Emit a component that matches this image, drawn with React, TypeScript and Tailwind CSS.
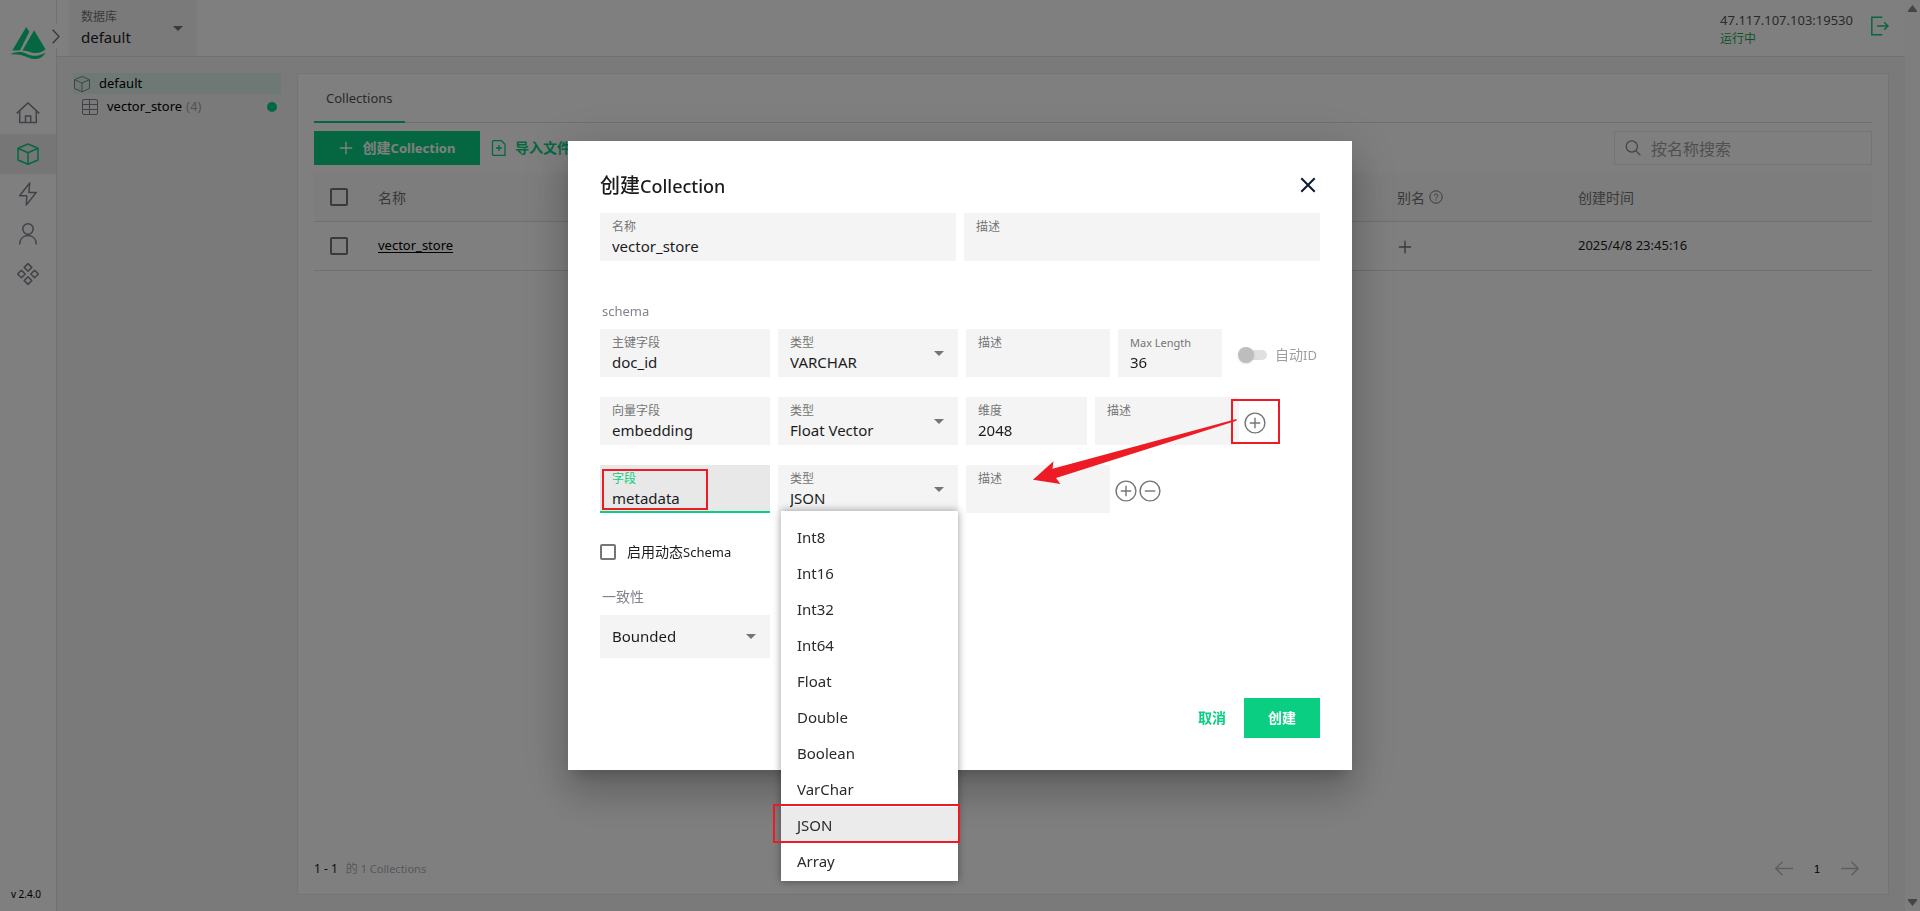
import { useState } from "react";
import type { ReactNode } from "react";

const dataTypes = ["Int8", "Int16", "Int32", "Int64", "Float", "Double", "Boolean", "VarChar", "JSON", "Array"];

const Svg = ({ size = 24, box = 24, stroke = 1.5, className = "", children }: any) => (
  <svg
    width={size}
    height={size}
    viewBox={`0 0 ${box} ${box}`}
    fill="none"
    stroke="currentColor"
    strokeWidth={stroke}
    className={`shrink-0 ${className}`}
    aria-hidden="true"
  >
    {children}
  </svg>
);

const CubeIcon = ({ size = 24, stroke = 1.5 }: any) => (
  <Svg size={size} stroke={stroke}>
    <path d="M12 2 22 6.3V18L12 22.3 2 18V6.3zM2 6.3l10 4.4 10-4.4M12 10.7v11.6" strokeLinejoin="round" />
  </Svg>
);

const HomeIcon = () => (
  <Svg>
    <path d="M.7 11.4 12 .9l11.300 10.500M3.700 9v11.500h16.600V9M9.500 20.500v-6.500h5.200v6.500" />
  </Svg>
);

const BoltIcon = () => (
  <Svg>
    <path d="M13.7 1 3.6 13.7h7.2L10.3 23l10-12.6h-7.4z" strokeLinejoin="round" />
  </Svg>
);

const UserIcon = () => (
  <Svg>
    <circle cx="12" cy="7" r="5.2" />
    <path d="M3.8 22.4c0-5.4 3.2-8.8 8.2-8.8s8.2 3.4 8.2 8.8" />
  </Svg>
);

const DiamondsIcon = () => (
  <Svg>
    <path
      d="m12 1.6 3.8 3.8L12 9.2 8.2 5.4zM12 14.8l3.8 3.8-3.8 3.8-3.8-3.8zM5.4 8.2 9.2 12l-3.8 3.8L1.6 12zM18.6 8.2l3.8 3.8-3.8 3.8-3.8-3.8z"
      strokeLinejoin="round"
    />
  </Svg>
);

const TableIcon = () => (
  <Svg size={16} box={16} stroke={1}>
    <rect x=".5" y=".5" width="15" height="15" rx="1.5" />
    <path d="M.5 5.5h15M.5 10.5h15M7.5 .5v15" />
  </Svg>
);

const PlusIcon = ({ size = 14 }: any) => (
  <Svg size={size} box={14} stroke={1.4}>
    <path d="M7 .8v12.4M.8 7h12.4" />
  </Svg>
);

const CirclePlus = () => (
  <Svg size={22} box={22} stroke={1.4}>
    <circle cx="11" cy="11" r="9.9" />
    <path d="M11 5.8v10.4M5.8 11h10.4" />
  </Svg>
);

const CircleMinus = () => (
  <Svg size={22} box={22} stroke={1.4}>
    <circle cx="11" cy="11" r="9.9" />
    <path d="M5.8 11h10.4" />
  </Svg>
);

const Logo = () => (
  <svg width="36" height="33" viewBox="0 0 36 33" fill="#0acf83" aria-hidden="true">
    <path d="M16.2 0 2.4 23.3c2.6.5 5.4.4 7.8-.2L19.300 4.800z" />
    <path d="M24.1 3.3 12.500 23.400c4.600-.300 8.300 2.600 13.100 2.600 4.200 0 7.500-1.600 9.900-3.800z" />
    <path d="M0 27.400c6-3 11.500-3.200 16.500-.700 6.500 3.200 12.500 2.600 19.300-1.300-3.600 6-10.300 8.200-17 5.400-6.500-2.800-11.800-3.900-18.800-3.400z" />
  </svg>
);

const Caret = ({ className = "" }: any) => (
  <svg width="10" height="5" viewBox="0 0 10 5" fill="#757575" className={`pointer-events-none absolute ${className}`} aria-hidden="true">
    <path d="M0 0h10L5 5z" />
  </svg>
);

const Field = ({ id, label, value = "", width, focused = false, children }: any) => (
  <div
    className={`relative flex h-12 flex-col pt-[6px] ${width} ${
      focused ? "border-b-2 border-[#0acf83] bg-[#e8e8e8]" : "bg-[#f4f4f4]"
    }`}
  >
    <label htmlFor={id} className={`px-3 text-xs leading-4 ${focused ? "text-[#0acf83]" : "text-[#757575]"}`}>
      {label}
    </label>
    <input id={id} defaultValue={value} className="h-[22px] w-full bg-transparent px-3 text-[15px] text-[#1c1c1e] outline-none" />
    {children}
  </div>
);

const TypeField = ({ id, value, children }: any) => (
  <div className="relative flex h-12 w-[180px] flex-col bg-[#f4f4f4] pt-[6px]">
    <label htmlFor={id} className="px-3 text-xs leading-4 text-[#757575]">
      类型
    </label>
    <select
      id={id}
      defaultValue={value}
      className="h-[22px] w-full appearance-none bg-transparent px-3 text-[15px] text-[#1c1c1e] outline-none"
    >
      <option>{value}</option>
    </select>
    <Caret className="top-[22px] right-[14px]" />
    {children}
  </div>
);

const TypeMenu = ({ selected, onSelect }: { selected: string; onSelect: (t: string) => void }) => (
  <ul
    role="listbox"
    aria-label="类型"
    className="absolute top-[46px] left-[3px] z-10 w-[177px] bg-white pt-2 pb-[2px] shadow-[0_0_8px_rgba(0,0,0,0.4)]"
  >
    {dataTypes.map((type) => (
      <li
        key={type}
        role="option"
        aria-selected={type === selected}
        onClick={() => onSelect(type)}
        className={`relative h-9 px-4 text-[15px] leading-9 text-[#2b2b2d] ${type === selected ? "bg-[#ebebeb]" : ""}`}
      >
        {type}
        {type === selected && (
          <span className="pointer-events-none absolute -top-[3px] -right-[2px] bottom-0 -left-2 border-2 border-[#ed1c24]" />
        )}
      </li>
    ))}
  </ul>
);

const Checkbox = ({ id, label, size }: { id: string; label?: string; size: string }) => (
  <input
    id={id}
    type="checkbox"
    aria-label={label}
    className={`block shrink-0 appearance-none rounded-[2px] border-2 border-[#757575] ${size}`}
  />
);

const NavItem = ({ label, active = false, children }: { label: string; active?: boolean; children: ReactNode }) => (
  <a
    href="#"
    aria-label={label}
    className={`flex h-10 items-center justify-center ${active ? "bg-[#ececec] text-[#0acf83]" : "text-[#82838e]"}`}
  >
    {children}
  </a>
);

const Sidebar = () => (
  <nav className="relative flex w-[57px] shrink-0 flex-col border-r border-[#e0e0e0] bg-white">
    <div className="flex h-[94px] justify-center pt-[27px]">
      <Logo />
    </div>
    <button aria-label="展开" className="absolute top-6 -right-[6px] flex h-6 w-3 items-center justify-center bg-white text-[#757575]">
      <svg width="8" height="15" viewBox="0 0 8 15" fill="none" stroke="currentColor" strokeWidth="1.4" aria-hidden="true">
        <path d="m.7.7 6.300 6.800-6.300 6.800" />
      </svg>
    </button>
    <NavItem label="首页"><HomeIcon /></NavItem>
    <NavItem label="数据库" active><CubeIcon /></NavItem>
    <NavItem label="搜索"><BoltIcon /></NavItem>
    <NavItem label="用户"><UserIcon /></NavItem>
    <NavItem label="系统"><DiamondsIcon /></NavItem>
    <div className="mt-auto pr-1 pb-2 text-center text-[10px] leading-[18px] text-black">v 2.4.0</div>
  </nav>
);

const Header = () => (
  <header className="flex h-[57px] shrink-0 justify-between border-b border-[#e0e0e0] bg-white pr-4 pl-3">
    <div className="relative flex w-32 flex-col bg-[#f4f4f4] pt-[9px]">
      <label htmlFor="db" className="px-3 text-xs leading-4 text-[#757575]">数据库</label>
      <select id="db" className="h-6 w-full appearance-none bg-transparent px-3 text-[15px] text-[#1c1c1e] outline-none">
        <option>default</option>
      </select>
      <Caret className="top-[26px] right-[14px]" />
    </div>
    <div className="flex gap-4">
      <div className="pt-[10px]">
        <div className="text-[13px] leading-5 text-[#545454]">47.117.107.103:19530</div>
        <div className="pt-px text-xs leading-4 text-[#1ba954]">运行中</div>
      </div>
      <button aria-label="退出" className="flex h-[52px] items-center text-[#0acf83]">
        <Svg size={20} box={20} stroke={1.5}>
          <path d="M13.300 1.300H2.800v17.400h10.500M8 10h11M15.200 6.200 19 10l-3.800 3.800" />
        </Svg>
      </button>
    </div>
  </header>
);

const Tree = () => (
  <aside className="w-[208px] shrink-0 text-[13px] text-black">
    <div className="flex h-[21px] items-center gap-2 bg-[#dcf0e8]">
      <span className="flex text-[#82838e]"><CubeIcon size={18} stroke={1.300} /></span>
      <span className="pt-px">default</span>
    </div>
    <div className="flex h-[25px] items-center pr-1 pl-[9px]">
      <span className="text-[#82838e]"><TableIcon /></span>
      <span className="ml-[9px] pt-px">vector_store</span>
      <span className="ml-1 pt-px text-[#a4a4ae]">(4)</span>
      <span className="ml-auto size-[10px] rounded-full bg-[#0acf83]" />
    </div>
  </aside>
);

const Collections = () => (
  <section className="flex min-w-0 flex-1 flex-col border border-[#e9e9ed] bg-white px-4 text-[#1c1c1e]">
    <div className="flex h-[49px] border-b border-[#e0e0e0]">
      <button className="-mb-px h-[49px] border-b-2 border-[#0acf83] px-3 pt-[2px] text-[13px] text-[#545459]">
        Collections
      </button>
    </div>

    <div className="mt-2 flex items-center">
      <button className="flex h-[34px] w-[166px] items-center justify-center gap-[10px] bg-[#0acf83] text-sm font-bold text-white">
        <PlusIcon />
        <span>创建<span className="text-[13px]">Collection</span></span>
      </button>
      <button className="ml-[11px] flex items-center gap-2 text-sm font-bold text-[#0acf83]">
        <Svg size={16} box={16} stroke={1.300}>
          <path d="M2.200.700h8.300L14 4.200v11.100H2.200a.700.700 0 0 1-.700-.700V1.400a.700.700 0 0 1 .700-.700zM8 5v6M5 8h6" />
        </Svg>
        导入文件
      </button>
      <label className="ml-auto flex h-[34px] w-[258px] items-center border border-[#e9e9ed] pl-[10px] text-[#82838e]">
        <Svg size={16} box={16} stroke={1.200}>
          <circle cx="6.800" cy="6.500" r="5.600" />
          <path d="m10.800 10.700 4.600 4.600" />
        </Svg>
        <input
          placeholder="按名称搜索"
          aria-label="按名称搜索"
          className="ml-[10px] w-full bg-transparent pt-[2px] text-base outline-none placeholder:text-[#a0a0a0]"
        />
      </label>
    </div>

    <table className="mt-2 w-full table-fixed text-left text-[13px]">
      <thead>
        <tr className="h-12 border-b border-[#e0e0e0] bg-[#fafafa] text-sm text-[#757575]">
          <th className="w-12 pl-4"><Checkbox id="all" label="全选" size="size-[18px]" /></th>
          <th className="px-4 pt-[3px] font-normal">名称</th>
          <th className="w-[181px] px-4 pt-[3px] font-normal">
            <span className="flex items-center gap-1">
              别名
              <Svg size={14} box={14} stroke={1} className="-mt-[3px]">
                <circle cx="7" cy="7" r="6.200" />
                <path d="M5.300 5.700c0-2.300 3.500-2.200 3.500 0 0 1.300-1.800 1.300-1.800 2.700M7 9.400v1.100" />
              </Svg>
            </span>
          </th>
          <th className="w-[310px] px-4 pt-[3px] font-normal">创建时间</th>
        </tr>
      </thead>
      <tbody>
        <tr className="h-[49px] border-b border-[#e0e0e0]">
          <td className="pl-4"><Checkbox id="row" label="vector_store" size="size-[18px]" /></td>
          <td className="px-4"><a href="#" className="text-black underline underline-offset-2">vector_store</a></td>
          <td className="px-[17px] pt-[3px] text-[#757575]"><button aria-label="添加别名" className="flex"><PlusIcon /></button></td>
          <td className="px-4">2025/4/8 23:45:16</td>
        </tr>
      </tbody>
    </table>

    <div className="mt-auto flex h-[50px] items-center justify-between text-[11px]">
      <div className="flex items-center gap-2">
        <span className="text-xs">1 - 1</span>
        <span className="text-[#aeaebb]"><span className="text-xs">的</span> 1 Collections</span>
      </div>
      <div className="flex items-center gap-5 pr-3 text-[#bdbdbd]">
        <button aria-label="上一页">
          <Svg size={20} box={20} stroke={1.500}><path d="M19 9.500H2M8.500 2.800 1.800 9.500l6.700 6.700" /></Svg>
        </button>
        <span className="font-['Liberation_Sans'] text-black">1</span>
        <button aria-label="下一页">
          <Svg size={20} box={20} stroke={1.500}><path d="M1 9.500h17M11.500 2.800l6.700 6.700-6.700 6.700" /></Svg>
        </button>
      </div>
    </div>
  </section>
);

const ScrollTrack = () => (
  <div className="flex w-[15px] shrink-0 flex-col items-center justify-between bg-[#fcfcfc] py-[5px]">
    <svg width="9" height="7" viewBox="0 0 9 7" fill="#8a8a8a" aria-hidden="true"><path d="M4.500 0 9 5.500V7H0V5.500z" /></svg>
    <svg width="9" height="7" viewBox="0 0 9 7" fill="#8a8a8a" aria-hidden="true"><path d="M4.500 7 9 1.500V0H0v1.500z" /></svg>
  </div>
);

const CreateDialog = () => {
  const [type, setType] = useState("JSON");

  return (
    <div
      role="dialog"
      aria-labelledby="dialog-title"
      className="w-[784px] bg-white px-8 pt-7 pb-8 text-[#1c1c1e] shadow-[0_11px_15px_-7px_rgba(0,0,0,0.2),0_24px_38px_3px_rgba(0,0,0,0.14),0_9px_46px_8px_rgba(0,0,0,0.12)]"
    >
      <div className="flex h-11 items-start justify-between">
        <h2 id="dialog-title" className="text-xl leading-[34px] font-medium">
          创建<span className="text-lg">Collection</span>
        </h2>
        <button aria-label="关闭" className="flex h-8 w-6 items-center justify-center text-[#0c1a2f]">
          <Svg size={16} box={16} stroke={2}><path d="m1.300 1.300 13.400 13.400M14.700 1.300 1.300 14.700" /></Svg>
        </button>
      </div>

      <div className="flex gap-2">
        <Field id="name" label="名称" value="vector_store" width="flex-1" />
        <Field id="desc" label="描述" width="flex-1" />
      </div>

      <div className="mt-10 h-7 pl-[2px] text-[13px] leading-5 text-[#82838e]">schema</div>

      <div className="flex flex-col gap-5">
        <div className="flex gap-2">
          <Field id="pk" label="主键字段" value="doc_id" width="w-[170px]" />
          <TypeField id="pk-type" value="VARCHAR" />
          <Field id="pk-desc" label="描述" width="w-36" />
          <Field id="pk-max" label={<span className="text-[11px]">Max Length</span>} value="36" width="w-[104px]" />
          <label className="ml-2 flex items-center gap-2 pt-1 text-sm text-[#9e9e9e]">
            <span className="relative flex h-4 w-[29px] items-center">
              <input type="checkbox" role="switch" disabled className="ml-auto h-[10px] w-[26px] appearance-none rounded-full bg-[#e0e0e0]" />
              <span className="absolute left-0 size-4 rounded-full bg-[#bdbdbd] shadow-sm" />
            </span>
            <span>自动<span className="text-[13px]">ID</span></span>
          </label>
        </div>

        <div className="relative flex gap-2">
          <Field id="vec" label="向量字段" value="embedding" width="w-[170px]" />
          <TypeField id="vec-type" value="Float Vector" />
          <Field id="vec-dim" label="维度" value="2048" width="w-[121px]" />
          <Field id="vec-desc" label="描述" width="w-36" />
          <div className="relative -ml-4 flex w-[49px] items-center self-stretch pt-1 pl-[13px] text-[#757575]">
            <button aria-label="添加字段"><CirclePlus /></button>
            <span className="pointer-events-none absolute top-[2px] bottom-px left-0 w-full border-2 border-[#ed1c24]" />
          </div>
          <svg
            width="204"
            height="66"
            viewBox="0 0 204 66"
            fill="#ed1c24"
            className="pointer-events-none absolute top-[22px] left-[433px] z-10"
            aria-hidden="true"
          >
            <path d="M203.500 0 19.500 49.700 20.500 42.300 0 60.700l27.500 4.300-4.500-6L203.500 1.800z" />
          </svg>
        </div>

        <div className="flex gap-2">
          <Field id="meta" label="字段" value="metadata" width="w-[170px]" focused>
            <span className="pointer-events-none absolute top-1 bottom-px left-[2px] w-[106px] border-2 border-[#ed1c24]" />
          </Field>
          <TypeField key={type} id="meta-type" value={type}>
            <TypeMenu selected={type} onSelect={setType} />
          </TypeField>
          <Field id="meta-desc" label="描述" width="w-36" />
          <div className="-ml-[3px] flex items-center gap-[2px] pt-1 text-[#757575]">
            <button aria-label="添加字段"><CirclePlus /></button>
            <button aria-label="删除字段"><CircleMinus /></button>
          </div>
        </div>
      </div>

      <div className="mt-7 flex h-[22px] items-center gap-[11px] text-sm">
        <Checkbox id="dynamic" size="size-4" />
        <label htmlFor="dynamic">启用动态<span className="text-[13px]">Schema</span></label>
      </div>

      <label htmlFor="consistency" className="mt-6 block h-7 pl-[2px] text-sm text-[#82838e]">
        一致性
      </label>
      <div className="relative w-[170px] bg-[#f4f4f4]">
        <select id="consistency" className="block h-[43px] w-full appearance-none bg-transparent px-3 text-[15px] outline-none">
          <option>Bounded</option>
        </select>
        <Caret className="top-[19px] right-[14px]" />
      </div>

      <div className="mt-10 flex justify-end text-sm font-bold">
        <button className="h-10 px-[18px] text-[#0acf83]">取消</button>
        <button className="h-10 w-[76px] bg-[#0acf83] text-white">创建</button>
      </div>
    </div>
  );
};

export default function App() {
  return (
    <div className="flex h-screen w-full overflow-hidden bg-[#f5f5f5] font-['Noto_Sans','Noto_Sans_CJK_SC',sans-serif]">
      <Sidebar />
      <div className="flex min-w-0 flex-1 flex-col">
        <Header />
        <main className="flex min-h-0 flex-1 gap-4 p-4">
          <Tree />
          <Collections />
        </main>
      </div>
      <ScrollTrack />
      <div className="fixed inset-0 z-20 flex items-center justify-center bg-black/50">
        <CreateDialog />
      </div>
    </div>
  );
}
